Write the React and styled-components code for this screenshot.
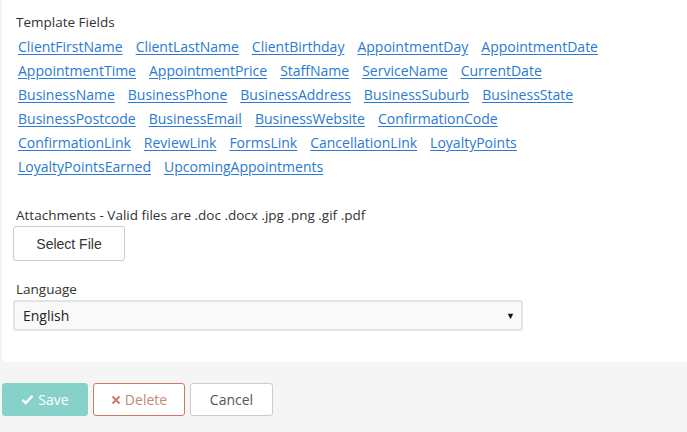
import styled, { createGlobalStyle } from 'styled-components';

const GlobalStyle = createGlobalStyle`
  html, body {
    margin: 0;
    padding: 0;
    background: #f5f5f5;
    font-family: "Open Sans", Lato, sans-serif;
    color: #333;
  }
  * { box-sizing: border-box; }
`;

const fields = [
  'ClientFirstName', 'ClientLastName', 'ClientBirthday', 'AppointmentDay', 'AppointmentDate',
  'AppointmentTime', 'AppointmentPrice', 'StaffName', 'ServiceName', 'CurrentDate',
  'BusinessName', 'BusinessPhone', 'BusinessAddress', 'BusinessSuburb', 'BusinessState',
  'BusinessPostcode', 'BusinessEmail', 'BusinessWebsite', 'ConfirmationCode',
  'ConfirmationLink', 'ReviewLink', 'FormsLink', 'CancellationLink', 'LoyaltyPoints',
  'LoyaltyPointsEarned', 'UpcomingAppointments',
];

export default function App() {
  return (
    <>
      <GlobalStyle />
      <Page>
        <Card>
          <Label>Template Fields</Label>
          <FieldList>
            {fields.map((f) => (
              <FieldLink key={f} href="#">{f}</FieldLink>
            ))}
          </FieldList>

          <Label $top={28}>Attachments - Valid files are .doc .docx .jpg .png .gif .pdf</Label>
          <FileButton type="button">Select File</FileButton>

          <Label $top={20}>Language</Label>
          <SelectBox>
            <span>English</span>
            <Arrow>▼</Arrow>
          </SelectBox>
        </Card>

        <Actions>
          <ActionButton $kind="save">
            <svg width="13" height="11" viewBox="0 0 13 11">
              <path d="M1.5 5.8 L4.8 9 L11.5 1.8" fill="none" stroke="#fff" strokeWidth="2.4" />
            </svg>
            Save
          </ActionButton>
          <ActionButton $kind="delete">
            <svg width="10" height="10" viewBox="0 0 10 10">
              <path d="M1.5 1.5 L8.5 8.5 M8.5 1.5 L1.5 8.5" stroke="#d07a66" strokeWidth="2" />
            </svg>
            Delete
          </ActionButton>
          <ActionButton $kind="cancel">Cancel</ActionButton>
        </Actions>
      </Page>
    </>
  );
}

const Page = styled.div`
  width: 687px;
  height: 432px;
  overflow: hidden;
`;

const Card = styled.div`
  margin-left: 2px;
  background: #fff;
  border-bottom-left-radius: 4px;
  padding: 14px 0 0 11px;
  height: 362px;
`;

const Label = styled.div`
  font-size: 13.5px;
  line-height: 16px;
  color: #333;
  margin-top: ${(p) => p.$top || 0}px;
  padding-left: 3px;
`;

const FieldList = styled.div`
  display: flex;
  flex-wrap: wrap;
  column-gap: 13px;
  width: 600px;
  padding-left: 5px;
  margin-top: 5px;
`;

const FieldLink = styled.a`
  font-size: 14px;
  line-height: 24px;
  color: #2a7ad2;
  text-decoration: underline;
  text-underline-offset: 2px;
`;

const FileButton = styled.button`
  display: block;
  margin-top: 3px;
  width: 112px;
  height: 35px;
  background: #fff;
  border: 1px solid #ccc;
  border-radius: 3px;
  font-family: "Liberation Sans", Arial, sans-serif;
  font-size: 14px;
  color: #333;
`;

const SelectBox = styled.div`
  margin-top: 3px;
  width: 510px;
  height: 31px;
  border: 2px solid #e3e3e3;
  border-radius: 3px;
  background: #f9f9f9;
  display: flex;
  align-items: center;
  justify-content: space-between;
  padding: 0 6px 0 8px;
  font-size: 14px;
  color: #222;
`;

const Arrow = styled.span`
  font-size: 9px;
  color: #111;
`;

const kinds = {
  save: 'background: #86d1c9; border-color: #86d1c9; color: #fff; width: 86px;',
  delete: 'background: #fff; border-color: #c97a66; color: #c4877a; width: 92px;',
  cancel: 'background: #fff; border-color: #ccc; color: #555; width: 83px;',
};

const Actions = styled.div`
  display: flex;
  gap: 5px;
  margin-top: 21px;
  padding-left: 2px;
`;

const ActionButton = styled.button`
  height: 33px;
  border: 1px solid;
  border-radius: 3px;
  font-family: "Open Sans", Lato, sans-serif;
  font-size: 14px;
  display: flex;
  align-items: center;
  justify-content: center;
  gap: 4px;
  padding: 0;
  ${(p) => kinds[p.$kind]}
`;
